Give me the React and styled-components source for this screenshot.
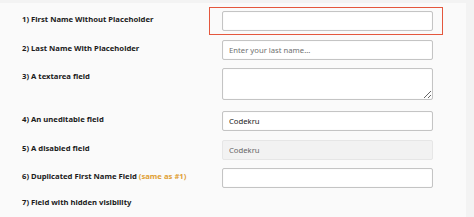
import React from 'react';
import styled, { createGlobalStyle } from 'styled-components';

const GlobalStyle = createGlobalStyle`
  html, body {
    margin: 0;
    padding: 0;
    background: #f3f3f3;
  }
  body {
    font-family: 'Noto Sans', 'Liberation Sans', sans-serif;
  }
`;

const Page = styled.div`
  width: 474px;
  height: 217px;
  overflow: hidden;
  background: #f3f3f3;
  padding-top: 3px;
  box-sizing: border-box;
`;

const Card = styled.form`
  background: #fafafa;
  margin-right: 8px;
  padding: 8px 0 0 22px;
  display: flex;
  flex-direction: column;
  gap: 8px;
  height: 230px;
`;

const Row = styled.div`
  display: flex;
  align-items: flex-start;
  margin-top: ${(p) => p.$extra || 0}px;
`;

const Label = styled.label`
  width: 200px;
  flex-shrink: 0;
  padding-top: 2px;
  font-size: 7.7px;
  line-height: 12px;
  font-weight: 700;
  color: #1c1c1c;
`;

const Note = styled.span`
  color: #e0a035;
`;

const FieldWrap = styled.div`
  position: relative;
  width: 211px;
`;

const Highlight = styled.div`
  position: absolute;
  top: -4px;
  bottom: -4px;
  left: -13px;
  right: -10px;
  border: 1.5px solid #e4573d;
  pointer-events: none;
`;

const Input = styled.input`
  display: block;
  width: 211px;
  height: 20px;
  box-sizing: border-box;
  border: 1px solid ${(p) => (p.disabled ? '#e6e6e6' : '#c4c4c4')};
  border-radius: 2px;
  background: ${(p) => (p.disabled ? '#f2f2f2' : '#fff')};
  box-shadow: ${(p) => (p.disabled ? 'none' : 'inset 0 0 1px rgba(0,0,0,0.15)')};
  padding: 0 6px;
  font-family: 'Noto Sans', 'Liberation Sans', sans-serif;
  font-size: 7.7px;
  color: ${(p) => (p.disabled ? '#666' : '#222')};
  visibility: ${(p) => (p.$hidden ? 'hidden' : 'visible')};
  &::placeholder {
    color: #6f6f6f;
  }
`;

const TextArea = styled.textarea`
  display: block;
  width: 211px;
  height: 32px;
  box-sizing: border-box;
  border: 1px solid #c4c4c4;
  border-radius: 2px;
  background: #fff;
  box-shadow: inset 0 0 1px rgba(0,0,0,0.15);
  margin: 0;
  padding: 4px 6px;
`;

export default function App() {
  return (
    <>
      <GlobalStyle />
      <Page>
        <Card>
          <Row>
            <Label>1) First Name Without Placeholder</Label>
            <FieldWrap>
              <Input type="text" />
              <Highlight />
            </FieldWrap>
          </Row>
          <Row $extra={1}>
            <Label>2) Last Name With Placeholder</Label>
            <Input type="text" placeholder="Enter your last name..." />
          </Row>
          <Row>
            <Label>3) A textarea field</Label>
            <TextArea />
          </Row>
          <Row $extra={3}>
            <Label>4) An uneditable field</Label>
            <Input type="text" defaultValue="Codekru" readOnly />
          </Row>
          <Row $extra={1}>
            <Label>5) A disabled field</Label>
            <Input type="text" defaultValue="Codekru" disabled />
          </Row>
          <Row>
            <Label>
              6) Duplicated First Name Field <Note>(same as #1)</Note>
            </Label>
            <Input type="text" />
          </Row>
          <Row $extra={-2}>
            <Label>7) Field with hidden visibility</Label>
            <Input type="text" $hidden />
          </Row>
        </Card>
      </Page>
    </>
  );
}
